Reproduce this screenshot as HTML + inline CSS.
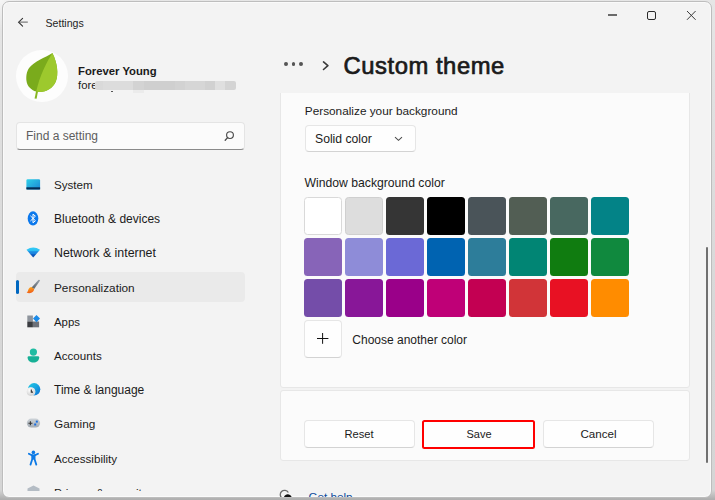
<!DOCTYPE html>
<html><head><meta charset="utf-8">
<style>
html,body{margin:0;padding:0;}
body{width:715px;height:500px;overflow:hidden;position:relative;font-family:"Liberation Sans",sans-serif;color:#1b1b1b;
background:radial-gradient(circle at 0 0,#f6f6f6 0,#f0f0f0 8px,rgba(240,240,240,0) 30px),linear-gradient(to bottom,#e6e6e6 0px,#e0e0e0 100px,#d8d8d8 300px,#d5d5d5 490px,#b8b8b8 497px,#afafaf 499px);}
.win{position:absolute;left:2px;top:1px;width:708px;height:495px;border:1px solid #bdbdbd;border-radius:7px;background:#f3f3f3;overflow:hidden;box-shadow:inset 0 0 0 1px #fafafa;}
.a{position:absolute;white-space:nowrap;line-height:1;}
.t{font-size:11.7px;}
.nav-ic{position:absolute;}
.card{position:absolute;background:#fbfbfb;border:1px solid #e7e7e7;box-sizing:border-box;}
.sw{position:absolute;width:38px;height:38px;border-radius:3.5px;box-sizing:border-box;}
.btn{position:absolute;background:#fefefe;border:1px solid #e6e6e6;border-bottom-color:#d3d3d3;border-radius:4px;box-sizing:border-box;}
</style></head><body>
<div class="win">
<!-- coordinates inside win are offset by (3,2) from page: left 2 + border 1 -->
<div style="position:absolute;left:-3px;top:-2px;width:715px;height:500px;">

<!-- back arrow -->
<svg class="a" style="left:17px;top:17px" width="13" height="11" viewBox="0 0 13 11"><path d="M2.5 5.2 H10.8" fill="none" stroke="#7c7c7c" stroke-width="1.3"/><path d="M5.6 1.3 L1.6 5.2 L5.6 9.1" fill="none" stroke="#333" stroke-width="1.1" stroke-linecap="round"/></svg>
<div class="a" style="left:45.5px;top:18px;font-size:10.6px;color:#1f1f1f">Settings</div>

<!-- window controls -->
<div style="position:absolute;left:608px;top:14px;width:9px;height:1.5px;background:#6a6a6a"></div>
<div style="position:absolute;left:647px;top:11px;width:6.6px;height:6.6px;border:1.2px solid #2a2a2a;border-radius:2px"></div>
<svg class="a" style="left:686px;top:10px" width="11" height="11" viewBox="0 0 11 11"><path d="M1 1 L9.6 9.8 M9.6 1 L1 9.8" stroke="#3a3a3a" stroke-width="1"/></svg>

<!-- avatar -->
<div style="position:absolute;left:16px;top:50px;width:51.5px;height:51.5px;border-radius:50%;background:#fdfdfd"></div>
<svg class="a" style="left:24px;top:50px" width="36" height="52" viewBox="0 0 36 52">
<path d="M12.3 40 L10.6 48.6 L12.6 48.8 L14.2 40.5 Z" fill="#86b522"/>
<path d="M28.4 2.9 C21 7.5 10 11.5 5.5 17.5 C2.3 21.5 2 27 2.5 31 C3 36 7 40 12.2 41.6 C20 43.5 29 39 32 31 C34.5 24 33.5 13 28.4 2.9 Z" fill="#7aab1c"/>
<path d="M28.4 2.9 C22.5 12 15.5 26 12.2 41.6 C20 43.5 29 39 32 31 C34.5 24 33.5 13 28.4 2.9 Z" fill="#9dc92d"/>
</svg>

<div class="a" style="left:78px;top:66px;font-size:11.3px;font-weight:bold;color:#1a1a1a">Forever Young</div>
<div class="a" style="left:78px;top:79.5px;font-size:11.3px;color:#1a1a1a">fore</div>
<div style="position:absolute;left:95px;top:80.5px;width:141px;height:9.5px;border-radius:2px;background:linear-gradient(to right,#dadada 0px,#d9d9d9 8px,#dcdcdc 8px,#dcdcdc 38px,#d3d3d3 38px,#d3d3d3 49px,#cfcfcf 49px,#cfcfcf 80px,#d2d2d2 80px,#d2d2d2 90px,#d6d6d6 90px,#d6d6d6 110px,#d1d1d1 110px,#d1d1d1 120px,#dfdfdf 120px,#dfdfdf 130px,#d4d4d4 130px)"></div><div style="position:absolute;left:133px;top:90px;width:11px;height:3px;background:#ebebeb"></div><div style="position:absolute;left:111px;top:90.5px;width:1.5px;height:1.2px;background:#555"></div>

<!-- search -->
<div style="position:absolute;left:16px;top:122px;width:229px;height:28px;box-sizing:border-box;background:#fbfbfb;border:1px solid #e4e4e4;border-bottom:1px solid #8a8a8a;border-radius:4px"></div>
<div class="a t" style="left:26px;top:129.5px;font-size:12px;color:#5d5d5d">Find a setting</div>
<svg class="a" style="left:222px;top:129px" width="14" height="14" viewBox="0 0 14 14"><circle cx="8" cy="6.1" r="3.4" fill="none" stroke="#4a4a4a" stroke-width="1.15"/><path d="M5.6 8.6 L3.2 11.2" stroke="#4a4a4a" stroke-width="1.3" stroke-linecap="round"/></svg>

<!-- nav -->
<div style="position:absolute;left:16px;top:271.5px;width:229px;height:30px;background:#eaeaea;border-radius:4px"></div>
<div style="position:absolute;left:16px;top:280px;width:3px;height:14px;background:#0067c0;border-radius:1.5px"></div>

<div style="position:absolute;left:0;top:0;width:260px;height:491px;overflow:hidden">
<div class="a t" style="left:54px;top:179px;font-size:11.6px">System</div>
<div class="a t" style="left:54px;top:213px;font-size:12px">Bluetooth &amp; devices</div>
<div class="a t" style="left:54px;top:247px;font-size:12.4px">Network &amp; internet</div>
<div class="a t" style="left:54px;top:282.5px;font-size:11.8px">Personalization</div>
<div class="a t" style="left:54px;top:317px;font-size:11.4px">Apps</div>
<div class="a t" style="left:54px;top:350px;font-size:11.6px">Accounts</div>
<div class="a t" style="left:54px;top:384px;font-size:12px">Time &amp; language</div>
<div class="a t" style="left:54px;top:419px;font-size:11.8px">Gaming</div>
<div class="a t" style="left:54px;top:453px;font-size:11.6px">Accessibility</div>
<div class="a t" style="left:54px;top:488px;font-size:11.8px">Privacy &amp; security</div>

<!-- icons -->
<svg class="a" style="left:26px;top:178.5px" width="15" height="11" viewBox="0 0 15 11"><defs><linearGradient id="gs" x1="0" y1="0" x2="1" y2="1"><stop offset="0" stop-color="#2fd0e8"/><stop offset="1" stop-color="#1a86d4"/></linearGradient></defs><rect x="0.4" y="0.3" width="13.7" height="10.2" rx="1.2" fill="url(#gs)"/><rect x="0.4" y="8.3" width="13.7" height="2.2" fill="#032c55"/></svg>
<svg class="a" style="left:27px;top:210.5px" width="12" height="15" viewBox="0 0 12 15"><ellipse cx="6" cy="7.4" rx="5.3" ry="7.1" fill="#0b78ec"/><path d="M3.4 4.8 L8.4 9.7 L6 11.8 V3.1 L8.4 5.2 L3.4 10" fill="none" stroke="#fff" stroke-width="1"/></svg>
<svg class="a" style="left:26px;top:247px" width="15" height="11" viewBox="0 0 15 11"><defs><linearGradient id="gw" x1="0" y1="0" x2="0" y2="1"><stop offset="0" stop-color="#34cbf6"/><stop offset="0.33" stop-color="#2cbdf2"/><stop offset="0.4" stop-color="#1e8fe2"/><stop offset="0.62" stop-color="#1a80dc"/><stop offset="0.7" stop-color="#0c5cc0"/><stop offset="1" stop-color="#0849a8"/></linearGradient></defs><path d="M0.5 2.8 Q7.2 -1.6 14 2.8 L7.2 10.6 Z" fill="url(#gw)"/></svg>
<svg class="a" style="left:24px;top:276px" width="20" height="20" viewBox="0 0 20 20"><defs><linearGradient id="gb" x1="0" y1="1" x2="1" y2="0"><stop offset="0" stop-color="#56606a"/><stop offset="1" stop-color="#9aa3ab"/></linearGradient><linearGradient id="go" x1="0" y1="0" x2="0.3" y2="1"><stop offset="0" stop-color="#ffb21a"/><stop offset="1" stop-color="#f0601a"/></linearGradient></defs><path d="M14.4 3.9 Q15.6 3.6 16.1 4.5 L10.2 13 L7.6 11.4 Z" fill="url(#gb)"/><path d="M7.4 11 C5 11.3 4.4 13.6 3.9 15 C3.6 15.8 3.1 16.3 2.6 16.6 C4.5 17.6 7.6 17.3 8.9 15.8 C9.9 14.6 10.1 13.3 10.2 12.9 Z" fill="url(#go)"/></svg>
<svg class="a" style="left:27px;top:314.5px" width="13" height="13" viewBox="0 0 13 13"><rect x="0.3" y="0.5" width="5.6" height="6" fill="#8e949c"/><rect x="0.3" y="6.5" width="5.6" height="5.8" fill="#3a3c40"/><rect x="5.9" y="6.5" width="6.2" height="5.8" fill="#6d7179"/><path d="M9.5 0 L13 3.5 L9.5 7.2 L6 3.5 Z" fill="#1a8ae8"/></svg>
<svg class="a" style="left:27px;top:347.5px" width="13" height="15" viewBox="0 0 13 15"><circle cx="6.4" cy="4.1" r="3.6" fill="#20bca2"/><path d="M1.8 8.3 H11 Q12.2 8.3 12.2 9.5 C12.2 12.6 9.5 14.5 6.4 14.5 C3.3 14.5 0.6 12.6 0.6 9.5 Q0.6 8.3 1.8 8.3 Z" fill="#17b096"/></svg>
<svg class="a" style="left:26px;top:381.5px" width="15" height="15" viewBox="0 0 15 15"><defs><linearGradient id="gt" x1="0" y1="0" x2="1" y2="1"><stop offset="0" stop-color="#22c8e2"/><stop offset="0.45" stop-color="#18a8e0"/><stop offset="1" stop-color="#0a6cd4"/></linearGradient><radialGradient id="gc" cx="0.4" cy="0.3" r="0.8"><stop offset="0" stop-color="#ffffff"/><stop offset="1" stop-color="#c8c8c8"/></radialGradient></defs><circle cx="8.1" cy="7.3" r="6.2" fill="url(#gt)"/><circle cx="4.8" cy="9.8" r="4.6" fill="#f4f4f4"/><circle cx="4.8" cy="9.8" r="4.1" fill="url(#gc)"/><path d="M5.3 7.4 V10.1 H7" fill="none" stroke="#333" stroke-width="1.15"/></svg>
<svg class="a" style="left:26px;top:418px" width="15" height="10" viewBox="0 0 15 10"><defs><linearGradient id="gg" x1="0" y1="0" x2="0" y2="1"><stop offset="0" stop-color="#cdd3d8"/><stop offset="1" stop-color="#a3abb3"/></linearGradient></defs><rect x="0.8" y="0.6" width="13.3" height="9" rx="4.5" fill="url(#gg)"/><path d="M2.4 5.2 H6.4 M4.4 3.2 V7.2" stroke="#333" stroke-width="1.1"/><rect x="9.8" y="2.6" width="2" height="2" fill="#1a6fe0"/><rect x="8.2" y="5.5" width="2" height="2" fill="#1a6fe0"/></svg>
<svg class="a" style="left:28px;top:450px" width="11" height="16" viewBox="0 0 11 16"><circle cx="5.4" cy="2.4" r="1.8" fill="#0d7ae6"/><path d="M0.8 3.8 L4 5.4 H6.8 L10 3.8" fill="none" stroke="#0d7ae6" stroke-width="1.8" stroke-linecap="round"/><path d="M4.2 5.2 V9.4 L2.5 14.6 M6.6 5.2 V9.4 L8.3 14.6" fill="none" stroke="#0d7ae6" stroke-width="1.8" stroke-linecap="round"/><rect x="4" y="5" width="2.8" height="4.6" fill="#0d7ae6"/></svg>
<svg class="a" style="left:26px;top:485px" width="15" height="8" viewBox="0 0 15 8"><path d="M1.5 3.5 L7.5 0.6 L13.5 3.5 V8 H1.5 Z" fill="#b4bcc4"/></svg>
</div>

<!-- right header -->
<div style="position:absolute;left:284px;top:62.2px;width:3.8px;height:3.8px;border-radius:50%;background:#555"></div>
<div style="position:absolute;left:291.5px;top:62.2px;width:3.8px;height:3.8px;border-radius:50%;background:#555"></div>
<div style="position:absolute;left:298.9px;top:62.2px;width:3.8px;height:3.8px;border-radius:50%;background:#555"></div>
<svg class="a" style="left:321px;top:60px" width="10" height="12" viewBox="0 0 10 12"><path d="M2.5 1.9 L6.9 5.7 L2.5 9.5" fill="none" stroke="#3a3a3a" stroke-width="1.6" stroke-linecap="round" stroke-linejoin="round"/></svg>
<div class="a" style="left:343.5px;top:54.3px;font-size:23.8px;-webkit-text-stroke:0.7px #1a1a1a;letter-spacing:0.55px;color:#1a1a1a">Custom theme</div>

<!-- right pane scroll viewport -->
<div style="position:absolute;left:270px;top:93px;width:430px;height:410px;overflow:hidden">
<div style="position:absolute;left:-270px;top:-93px;width:715px;height:600px">

<div class="card" style="left:280px;top:60px;width:410px;height:328px;border-radius:3px"></div>
<div class="a t" style="left:304.8px;top:105.5px;font-size:11.8px">Personalize your background</div>
<div class="btn" style="left:304.5px;top:125px;width:111px;height:27px"></div>
<div class="a t" style="left:315px;top:133px;font-size:12.2px">Solid color</div>
<svg class="a" style="left:394px;top:135px" width="10" height="7" viewBox="0 0 10 7"><path d="M1 2.2 L4.5 5.3 L8 2.2" fill="none" stroke="#4a4a4a" stroke-width="1.05"/></svg>
<div class="a t" style="left:304.5px;top:176.5px;font-size:12.2px">Window background color</div>

<!-- swatches -->
<div class="sw" style="left:304px;top:197px;background:#ffffff;border:1px solid #d9d9d9"></div>
<div class="sw" style="left:345px;top:197px;background:#dddddd;border:1px solid #cfcfcf"></div>
<div class="sw" style="left:386px;top:197px;background:#353535"></div>
<div class="sw" style="left:427px;top:197px;background:#000000"></div>
<div class="sw" style="left:468px;top:197px;background:#4a5459"></div>
<div class="sw" style="left:509px;top:197px;background:#525e54"></div>
<div class="sw" style="left:550px;top:197px;background:#486860"></div>
<div class="sw" style="left:591px;top:197px;background:#038387"></div>

<div class="sw" style="left:304px;top:238px;background:#8764b8"></div>
<div class="sw" style="left:345px;top:238px;background:#8e8cd8"></div>
<div class="sw" style="left:386px;top:238px;background:#6b69d6"></div>
<div class="sw" style="left:427px;top:238px;background:#0063b1"></div>
<div class="sw" style="left:468px;top:238px;background:#2d7d9a"></div>
<div class="sw" style="left:509px;top:238px;background:#018574"></div>
<div class="sw" style="left:550px;top:238px;background:#107c10"></div>
<div class="sw" style="left:591px;top:238px;background:#10893e"></div>

<div class="sw" style="left:304px;top:279px;background:#744da9"></div>
<div class="sw" style="left:345px;top:279px;background:#881798"></div>
<div class="sw" style="left:386px;top:279px;background:#9a0089"></div>
<div class="sw" style="left:427px;top:279px;background:#bf0077"></div>
<div class="sw" style="left:468px;top:279px;background:#c30052"></div>
<div class="sw" style="left:509px;top:279px;background:#d13438"></div>
<div class="sw" style="left:550px;top:279px;background:#e81123"></div>
<div class="sw" style="left:591px;top:279px;background:#ff8c00"></div>

<div class="btn" style="left:304px;top:320px;width:38px;height:38px"></div>
<svg class="a" style="left:317px;top:333px" width="12" height="12" viewBox="0 0 12 12"><path d="M0 5.5 H11.4 M5.6 0 V10.8" stroke="#111" stroke-width="1"/></svg>
<div class="a t" style="left:352.3px;top:333.5px;font-size:12px">Choose another color</div>

<div class="card" style="left:280px;top:390px;width:410px;height:71px;border-radius:3px"></div>
<div class="btn" style="left:304px;top:420px;width:111px;height:28px"></div>
<div class="a" style="left:303.5px;top:429.2px;width:111px;text-align:center;font-size:11.2px">Reset</div>
<div class="btn" style="left:422.3px;top:420px;width:113.1px;height:28.8px;border:2.6px solid #ff0000;border-radius:2.5px"></div>
<div class="a" style="left:422.5px;top:429.3px;width:113px;text-align:center;font-size:11px">Save</div>
<div class="btn" style="left:543px;top:420px;width:111px;height:28px"></div>
<div class="a" style="left:543px;top:428px;width:111px;text-align:center;font-size:11.6px">Cancel</div>

<svg class="a" style="left:279px;top:489px" width="15" height="15" viewBox="0 0 15 15"><path d="M3.45 9.32 A4.3 4.3 0 1 1 9.32 3.45" fill="none" stroke="#6a6a6a" stroke-width="1.3"/><path d="M4.4 10.5 C4.6 3.6 12.9 3.6 13.2 10.5 Z" fill="#111"/></svg>
<div class="a t" style="left:308.4px;top:490.5px;color:#0d4c9c">Get help</div>
</div>
</div>

<!-- scrollbar -->
<div style="position:absolute;left:706.2px;top:247px;width:2px;height:216px;border-radius:1px;background:#707070"></div>

</div>
</div>
</body></html>
